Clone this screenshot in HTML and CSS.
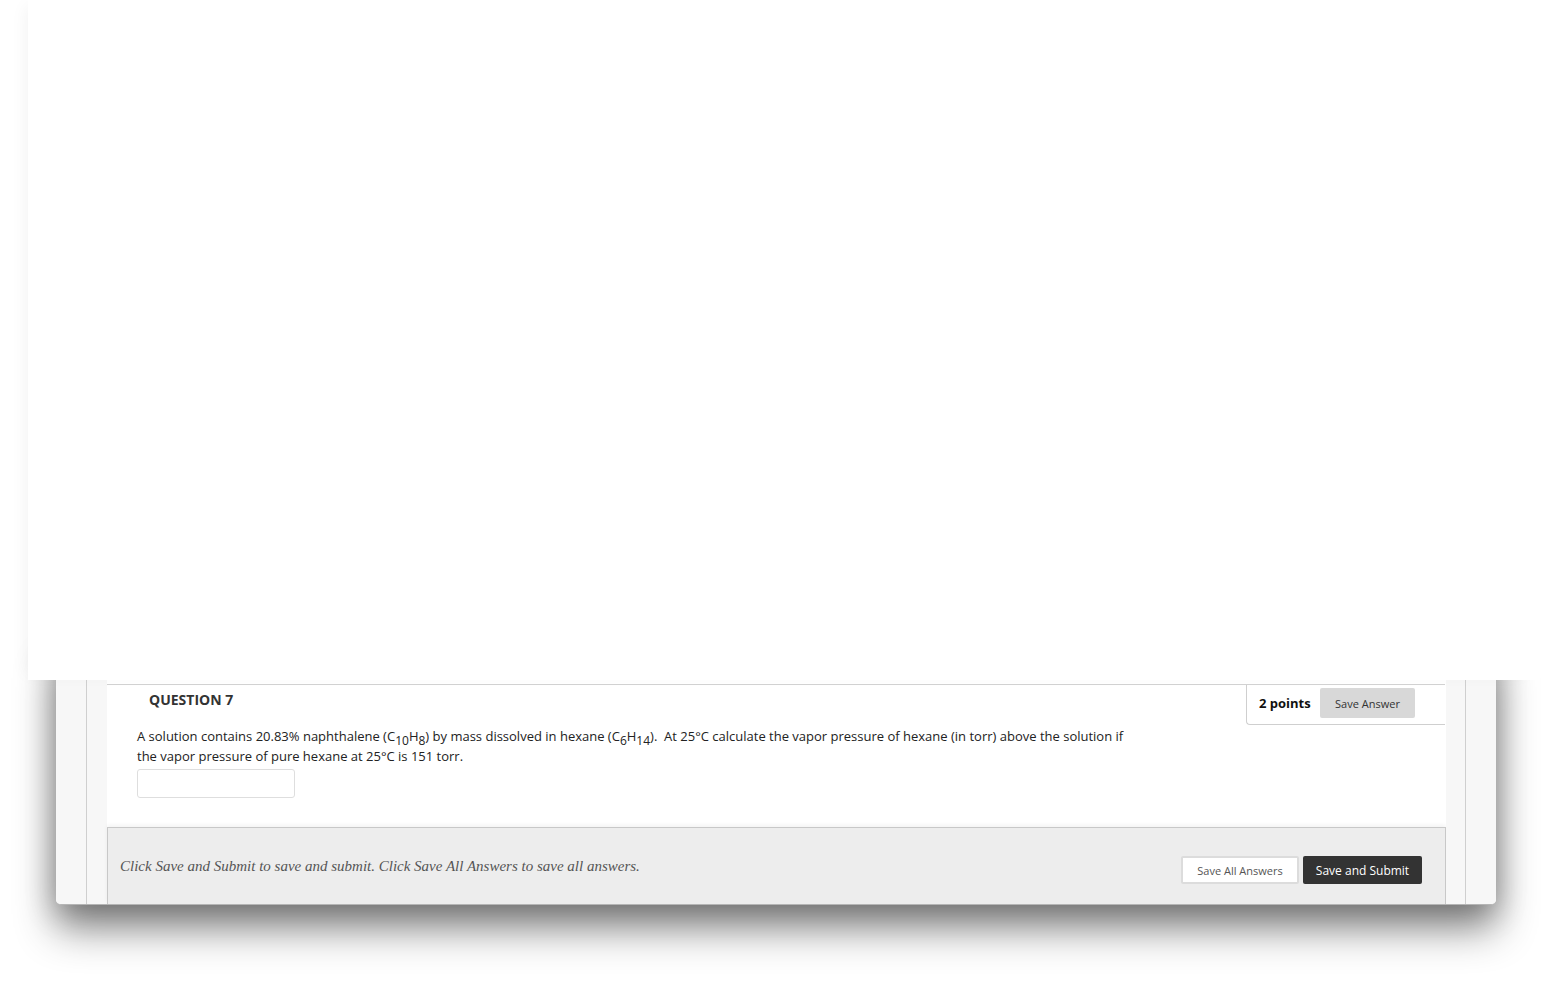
FILE: index.html
```html
<!doctype html>
<html>
  <head>
    <title>Question 7</title>
    <link rel="stylesheet" href="styles.css">
  </head>
  <body>
    <div class="window">
      <div class="frame frame-left">
        <div class="strip wide"></div>
        <div class="strip narrow"></div>
      </div>
      <div class="main">
        <div class="question">
          <div class="question-head">
            <h3 class="question-title">QUESTION 7</h3>
            <div class="points-box">
              <span class="points">2 points</span>
              <button class="btn btn-save">Save Answer</button>
            </div>
          </div>
          <div class="question-body">
            <p class="question-text">A solution contains 20.83% naphthalene (C<sub>10</sub>H<sub>8</sub>) by mass dissolved in hexane (C<sub>6</sub>H<sub>14</sub>).&nbsp; At 25°C calculate the vapor pressure of hexane (in torr) above the solution if the vapor pressure of pure hexane at 25°C is 151 torr.</p>
            <input type="text" class="answer">
          </div>
        </div>
        <div class="submit-bar">
          <span class="hint">Click Save and Submit to save and submit. Click Save All Answers to save all answers.</span>
          <div class="actions">
            <button class="btn btn-all">Save All Answers</button>
            <button class="btn btn-submit">Save and Submit</button>
          </div>
        </div>
      </div>
      <div class="frame frame-right">
        <div class="strip narrow"></div>
        <div class="strip wide"></div>
      </div>
    </div>
    <div class="sheet"></div>
  </body>
</html>
```

FILE: styles.css
```css
html, body {
  margin: 0;
  height: 100%;
  background: #fff;
  overflow: hidden;
}
body {
  font-family: "Open Sans", "Liberation Sans", sans-serif;
  font-size: 13px;
  color: #222;
}

/* the browser window underneath */
.window {
  position: absolute;
  left: 56px;
  top: 640px;
  width: 1440px;
  height: 264px;
  display: flex;
  border-radius: 0 0 5px 5px;
  border-bottom: 1px solid #b5b5b5;
  box-shadow: 0 24px 40px rgba(0, 0, 0, 0.45), 0 6px 30px rgba(0, 0, 0, 0.25);
  background: #f7f7f7;
  overflow: hidden;
}
.frame {
  display: flex;
}
.frame-left .wide {
  width: 30px;
  border-right: 1px solid #cfcfcf;
}
.frame-left .narrow {
  width: 20px;
}
.frame-right .narrow {
  width: 19px;
  border-right: 1px solid #cfcfcf;
}
.frame-right .wide {
  width: 30px;
}
.strip {
  background: #f7f7f7;
}
.main {
  width: 1339px;
  display: flex;
  flex-direction: column;
  background: #fff;
  padding-top: 44px;
}

/* question */
.question {
  border-top: 1px solid #d2d2d2;
  height: 142px;
  margin-right: 1px;
}
.question-head {
  display: flex;
  justify-content: space-between;
  align-items: flex-start;
}
.question-title {
  margin: 0;
  padding: 5px 0 0 42px;
  font-size: 14px;
  font-weight: 700;
  color: #333;
  line-height: 20px;
}
.points-box {
  display: flex;
  align-items: center;
  width: 156px;
  padding: 3px 30px 6px 12px;
  border-left: 1px solid #cfcfcf;
  border-bottom: 1px solid #cfcfcf;
  border-bottom-left-radius: 4px;
}
.points {
  font-weight: 700;
  font-size: 13px;
  color: #111;
  width: 61px;
}
.btn {
  font-family: "Open Sans", "Liberation Sans", sans-serif;
  cursor: pointer;
  border-radius: 2px;
}
.btn-save {
  width: 95px;
  height: 30px;
  border: 0;
  background: #d8d8d8;
  color: #333;
  font-size: 11px;
}
.question-body {
  padding: 1px 0 0 30px;
}
.question-text {
  margin: 0;
  width: 1000px;
  line-height: 20px;
  font-size: 13px;
  color: #222;
}
.question-text sub {
  font-size: 12px;
  vertical-align: -4px;
  line-height: 0;
}
.answer {
  display: block;
  margin-top: 3px;
  width: 158px;
  height: 29px;
  box-sizing: border-box;
  border: 1px solid #dedede;
  border-radius: 3px;
}

/* submit bar */
.submit-bar {
  flex: 1;
  display: flex;
  align-items: center;
  justify-content: space-between;
  padding: 0 23px 0 12px;
  background: #ededed;
  border: 1px solid #c8c8c8;
  border-bottom: 0;
  box-shadow: 0 -2px 4px rgba(0, 0, 0, 0.05);
}
.hint {
  font-family: "Liberation Serif", "DejaVu Serif", serif;
  font-style: italic;
  font-size: 15px;
  color: #555;
}
.actions {
  display: flex;
  gap: 4px;
  margin-top: 8px;
}
.btn-all {
  width: 118px;
  height: 28px;
  background: #fff;
  border: 2px solid #dcdcdc;
  color: #555;
  font-size: 11px;
}
.btn-submit {
  width: 119px;
  height: 28px;
  background: #333;
  border: 0;
  color: #fff;
  font-size: 12px;
}

/* white sheet lying over the top of the window */
.sheet {
  position: absolute;
  left: 28px;
  top: 0;
  width: 1512px;
  height: 680px;
  background: #fff;
  box-shadow: -8px 0 16px -6px rgba(0, 0, 0, 0.05);
}
```
